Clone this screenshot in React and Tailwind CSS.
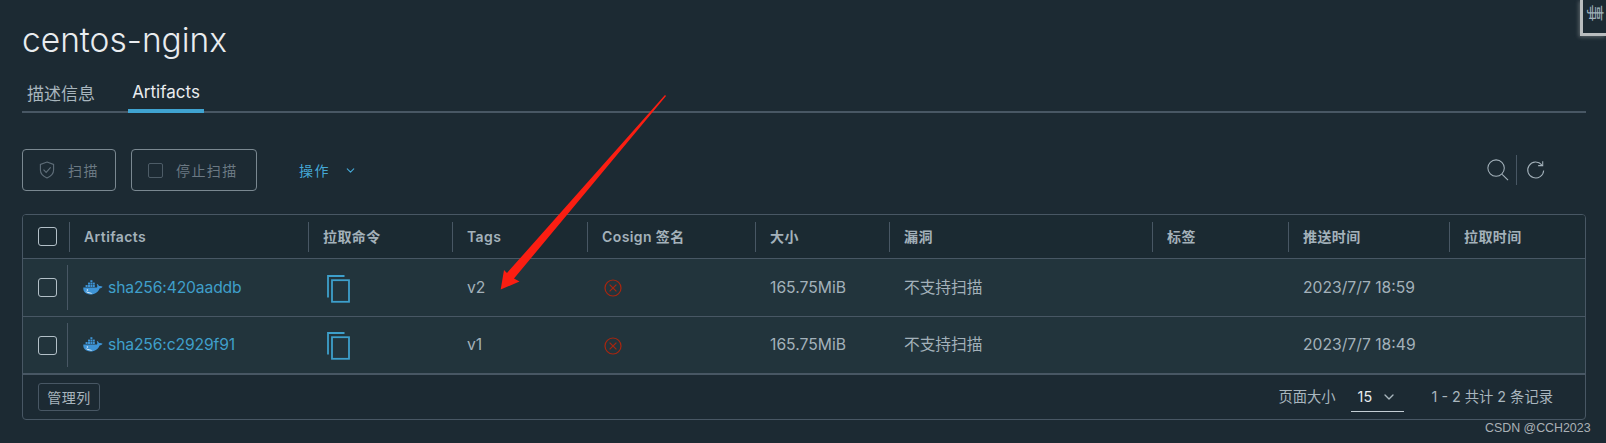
import React from 'react'
import { ChevronDown } from 'lucide-react'

const sans = 'font-[Inter,"Noto_Sans_CJK_SC",sans-serif]'

const columns = ['Artifacts', '拉取命令', 'Tags', 'Cosign 签名', '大小', '漏洞', '标签', '推送时间', '拉取时间']
const gridCols = 'grid-cols-[46px_239px_144px_135px_168px_134px_263px_136px_161px_1fr]'

const rows = [
  { digest: 'sha256:420aaddb', tag: 'v2', size: '165.75MiB', scan: '不支持扫描', pushed: '2023/7/7 18:59', height: 'h-[58px]', sep: 'h-[45px]' },
  { digest: 'sha256:c2929f91', tag: 'v1', size: '165.75MiB', scan: '不支持扫描', pushed: '2023/7/7 18:49', height: 'h-[57px]', sep: 'h-[44px]' },
]

function Checkbox() {
  return <div className="ml-[15px] h-[19px] w-[19px] rounded-[3px] border border-[#b3c0c8]" />
}

function ShieldCheck() {
  return (
    <svg width="16" height="18" viewBox="0 0 17 19" fill="none" stroke="#5f6e79" strokeWidth="1.2">
      <path d="M8.5 1 L15.5 3.6 V9.5 C15.5 13.5 12.5 16.2 8.5 18 C4.5 16.2 1.5 13.5 1.5 9.5 V3.6 Z" />
      <path d="M4.8 9.2 L7.6 12 L12.4 6.8" />
    </svg>
  )
}

function SearchIcon() {
  return (
    <svg width="22" height="22" viewBox="0 0 23 23" fill="none" stroke="#a3b1ba" strokeWidth="1.1">
      <circle cx="9.5" cy="9.5" r="8.6" />
      <path d="M15.8 16 L22 22" />
    </svg>
  )
}

function RefreshIcon() {
  return (
    <svg width="19" height="20" viewBox="0 0 20 20" fill="none" stroke="#a3b1ba" strokeWidth="1.1">
      <path d="M16.6 4.6 A8.4 8.4 0 1 0 18.6 10.5" />
      <path d="M17.6 0.8 V5.4 H12.8" />
    </svg>
  )
}

function DockerIcon() {
  return (
    <svg width="20" height="15" viewBox="0 0 20 15" className="shrink-0">
      <path d="M0.3 7.6 H14 C14.6 6.6 14.2 5.2 13.7 4.6 L14.4 4 C15.3 4.6 15.8 5.3 16 6 C17.3 5.7 18.6 6 19.6 6.7 C18.9 8 17.6 8.4 16.6 8.4 C15.2 12 12 14.4 7.4 14.4 C2.8 14.4 0 12 0.3 7.6 Z" fill="#3e94d6" />
      <rect x="2.6" y="5" width="2" height="2" fill="#3e94d6" />
      <rect x="5" y="5" width="2" height="2" fill="#3e94d6" />
      <rect x="7.4" y="5" width="2" height="2" fill="#3e94d6" />
      <rect x="9.8" y="5" width="2" height="2" fill="#3e94d6" />
      <rect x="5" y="2.6" width="2" height="2" fill="#3e94d6" />
      <rect x="7.4" y="2.6" width="2" height="2" fill="#3e94d6" />
      <rect x="9.8" y="2.6" width="2" height="2" fill="#3e94d6" />
      <rect x="7.4" y="0.2" width="2" height="2" fill="#3e94d6" />
      <path d="M2.6 11.2 C4.4 13.4 7.4 13.8 9.6 13.2 C7 12.6 4.6 12 2.6 11.2 Z" fill="#e8f2fa" />
      <circle cx="4.4" cy="10" r="0.8" fill="#e8f2fa" />
    </svg>
  )
}

function CopyIcon() {
  return (
    <svg width="23" height="28" viewBox="0 0 23 28" fill="none" stroke="#3d9fcb" strokeWidth="1.8">
      <path d="M1 22.5 V1 H17.5" />
      <rect x="5" y="5.2" width="17" height="21.6" />
    </svg>
  )
}

function XCircle() {
  return (
    <svg width="18" height="18" viewBox="0 0 18 18" fill="none" stroke="#a8260f" strokeWidth="1.2">
      <circle cx="9" cy="9" r="8" />
      <path d="M5.6 5.6 L12.4 12.4 M12.4 5.6 L5.6 12.4" />
    </svg>
  )
}

function Row({ row }) {
  return (
    <div className={`grid ${gridCols} ${row.height} items-center border-b border-[#485764] bg-[#22343c] text-[15.7px] text-[#a3b1ba]`}>
      <div className="flex items-center justify-between">
        <Checkbox />
        <div className={`${row.sep} w-px bg-[#485764] mr-[1px]`} />
      </div>
      <div className="flex items-center gap-[5px] pl-[14px] text-[#3f9fca]">
        <DockerIcon />
        <span className="tracking-[-0.15px]">{row.digest}</span>
      </div>
      <div className="pl-[19px] pt-[2px]"><CopyIcon /></div>
      <div className="pl-[15px]">{row.tag}</div>
      <div className="pl-[17px] pt-[1px]"><XCircle /></div>
      <div className="pl-[15px]">{row.size}</div>
      <div className="pl-[15px]">{row.scan}</div>
      <div />
      <div className="pl-[15px]">{row.pushed}</div>
      <div />
    </div>
  )
}

export default function App() {
  return (
    <div className={`relative h-[443px] w-[1606px] overflow-hidden bg-[#1c2a33] pl-[22px] pr-[20px] ${sans}`}>
      <div className="flex h-[75px] items-end pb-[15px] text-[33.5px] font-light leading-[40px] text-[#e9ecef]">centos-nginx</div>

      <div className="flex h-[38px] border-b-2 border-[#485764]">
        <div className="ml-[5px] flex h-[37px] w-[101px] items-center pt-[2px] text-[17px] text-[#a9b6be]">描述信息</div>
        <div className="flex h-[38px] w-[76px] items-center justify-center border-b-[4px] border-[#3fa3d1] pt-[2px] text-[17px] text-[#e9ecef]">Artifacts</div>
      </div>

      <div className="mt-[36px] flex h-[42px] items-center text-[14px] tracking-[1.4px] text-[#6b7983]">
        <div className="flex h-full w-[94px] items-center rounded-[4px] border border-[#7a8891] pl-[16px]">
          <ShieldCheck />
          <span className="ml-[13px]">扫描</span>
        </div>
        <div className="ml-[15px] flex h-full w-[126px] items-center rounded-[4px] border border-[#7a8891] pl-[16px]">
          <div className="h-[15px] w-[15px] rounded-[2px] border border-[#4d5c67]" />
          <span className="ml-[13px]">停止扫描</span>
        </div>
        <div className="ml-[42px] flex items-center text-[#45a8d6]">
          <span>操作</span>
          <ChevronDown size={13} className="ml-[14px]" />
        </div>
        <div className="ml-auto mr-[41px] flex items-center">
          <SearchIcon />
          <div className="ml-[7px] mr-[9px] h-[30px] w-px bg-[#485764]" />
          <RefreshIcon />
        </div>
      </div>

      <div className="mt-[23px] h-[206px] overflow-hidden rounded-[4px] border border-[#485764]">
        <div className={`grid ${gridCols} h-[44px] items-center border-b border-[#485764] bg-[#1b2a32] text-[14px] font-semibold tracking-[0.4px] text-[#a3b1ba]`}>
          <div className="flex items-center justify-between">
            <Checkbox />
          </div>
          {columns.map((col) => (
            <div key={col} className="flex h-[30px] items-center border-l border-[#485764] pl-[14px]">{col}</div>
          ))}
        </div>
        {rows.map((row) => (
          <Row key={row.digest} row={row} />
        ))}
        <div className="flex h-[45px] items-center border-t border-[#485764] pl-[15px] pr-[32px] text-[14.3px] text-[#a9b6be]">
          <div className="flex h-[28px] w-[62px] items-center justify-center rounded-[3px] border border-[#485764] text-[14px] tracking-[0.5px]">管理列</div>
          <span className="ml-auto">页面大小</span>
          <div className="ml-[15px] flex h-[30px] w-[53px] items-center border-b border-[#c4ced4] pl-[7px] text-[#e9ecef]">
            <span>15</span>
            <ChevronDown size={16} className="ml-[9px] text-[#a9b6be]" />
          </div>
          <span className="ml-[28px]">1 - 2 共计 2 条记录</span>
        </div>
      </div>

      {/* red annotation arrow */}
      <svg className="pointer-events-none absolute left-0 top-0" width="1606" height="443">
        <polygon points="665,95 666,96 514,278.5 519.5,281.5 500.7,289.5 504,270 507,273" fill="#fb1e12" />
      </svg>

      {/* browser translate widget, cut off at the corner */}
      <div className="absolute right-0 top-0 h-[36px] w-[26px] overflow-hidden border-b-[3px] border-l-[3px] border-[#b9bdbf] shadow-[-1px_1px_4px_rgba(200,200,200,0.4)]">
        <span className="absolute left-[3px] top-[4px] rotate-90 text-[17px] leading-[18px] text-[#9fb0ba]">事</span>
      </div>

      {/* watermark */}
      <div className="absolute left-[1485px] top-[419px] font-['Liberation_Sans',sans-serif] text-[12.4px] text-[#aab1b6]">CSDN @CCH2023</div>
    </div>
  )
}
